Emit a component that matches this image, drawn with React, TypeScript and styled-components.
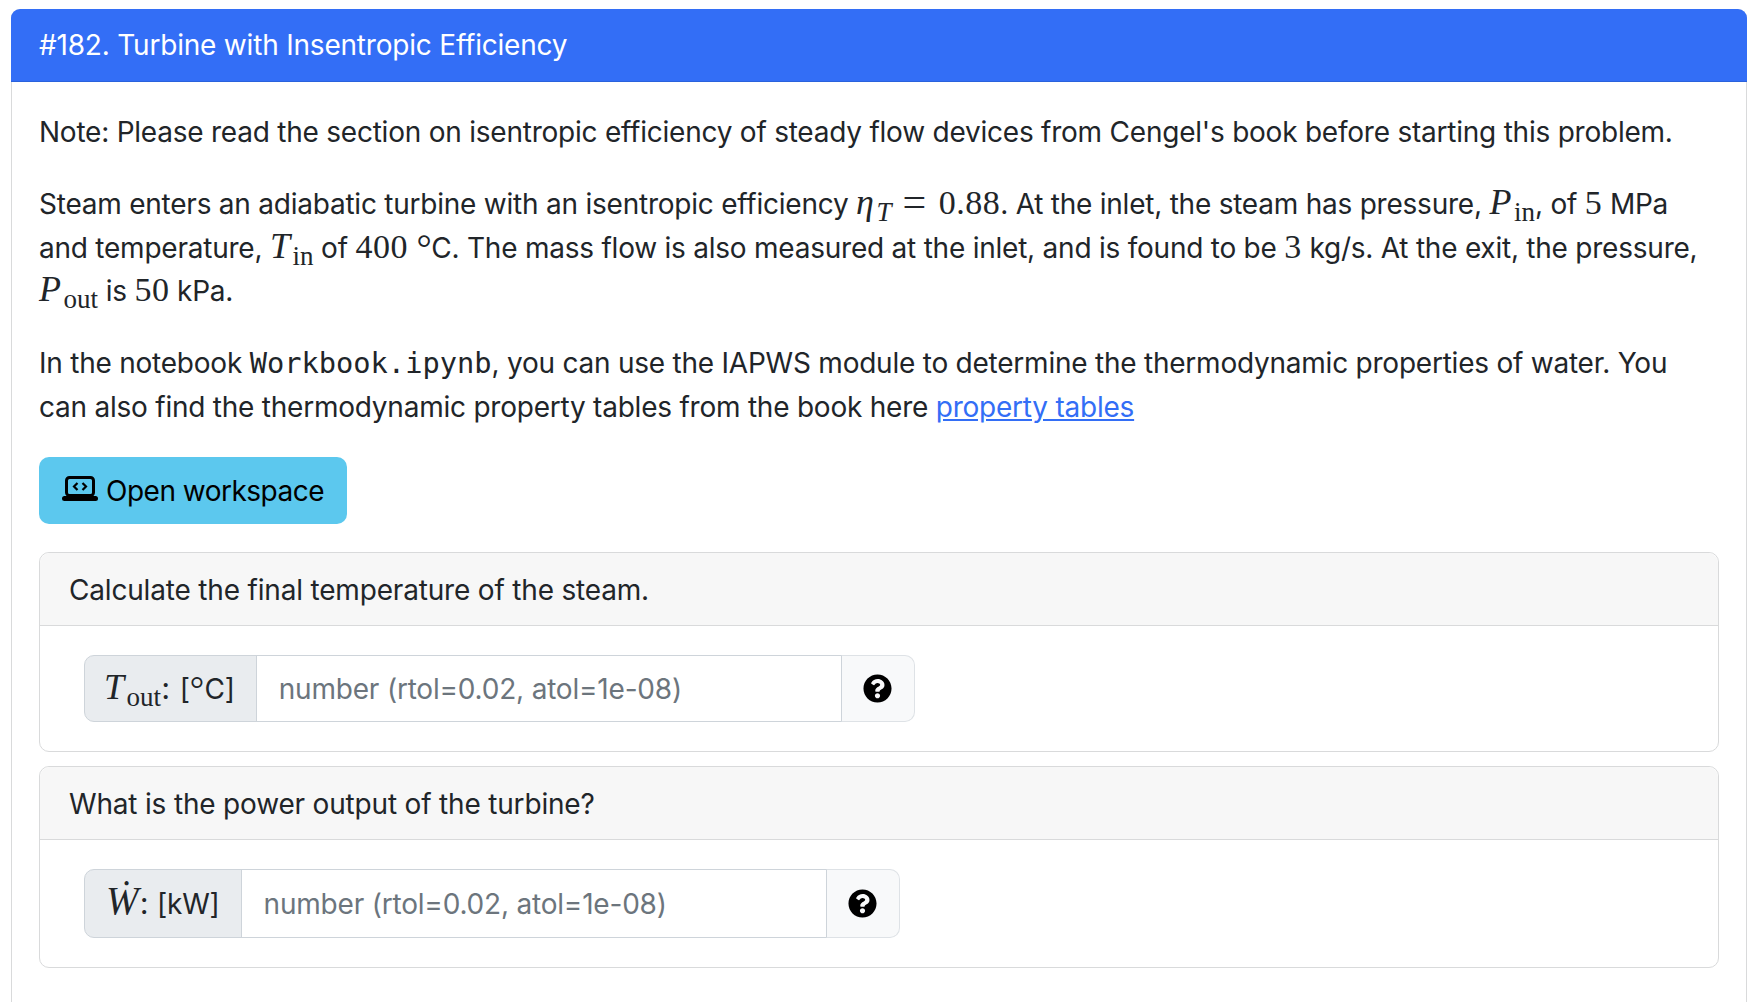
import React from 'react';
import styled, { createGlobalStyle } from 'styled-components';
import { FaQuestionCircle } from 'react-icons/fa';

const GlobalStyle = createGlobalStyle`
  html, body {
    margin: 0;
    height: 100%;
    overflow: hidden;
    background: #fff;
  }
  body {
    padding: 9px 5px 0 11px;
    box-sizing: border-box;
    font-family: Inter, "Liberation Sans", sans-serif;
    font-size: 28px;
    line-height: 43.5px;
    letter-spacing: -0.23px;
    color: #212529;
  }
`

function LaptopCodeIcon() {
  return (
    <IconSvg viewBox="0 0 36 25" width="36" height="25">
      <rect x="4.5" y="1.5" width="27" height="18" rx="3" fill="none" stroke="#000" strokeWidth="3" />
      <rect x="0" y="20" width="36" height="5" rx="2.5" fill="#000" />
      <path d="M15.5 7l-3.5 3.5 3.5 3.5M20.5 7l3.5 3.5-3.5 3.5" fill="none" stroke="#000" strokeWidth="2.2" />
    </IconSvg>
  )
}

function Question({ title, label, inset, groupHeight }: { title: string; label: React.ReactNode; inset: number; groupHeight: number }) {
  return (
    <QuestionCard>
      <QuestionHeader>{title}</QuestionHeader>
      <QuestionBody>
        <InputGroup $height={groupHeight}>
          <InputLabel $inset={inset}><span>{label}</span></InputLabel>
          <NumberInput type="text" placeholder="number (rtol=0.02, atol=1e-08)" />
          <HelpAddon>
            <FaQuestionCircle size={29} color="#000" />
          </HelpAddon>
        </InputGroup>
      </QuestionBody>
    </QuestionCard>
  )
}

function App() {
  return (
    <>
      <GlobalStyle />
      <Card>
        <CardHeader>#182. Turbine with Insentropic Efficiency</CardHeader>
        <CardBody>
          <Paragraph>
            Note: Please read the section on isentropic efficiency of steady flow devices from Cengel's book before starting this problem.
          </Paragraph>
          <Paragraph>
            Steam enters an adiabatic turbine with an isentropic efficiency <Var>η</Var><SubVar>T</SubVar><Rel>=</Rel><Num>0.88</Num>. At the inlet, the steam has pressure, <Var>P</Var><Sub>in</Sub>, of <Num>5</Num> MPa<br />
            and temperature, <Var>T</Var><Sub>in</Sub> of <Num>400</Num> <Degree>°</Degree>C. The mass flow is also measured at the inlet, and is found to be <Num>3</Num> kg/s. At the exit, the pressure,<br />
            <Var>P</Var><Sub>out</Sub> is <Num>50</Num> kPa.
          </Paragraph>
          <Paragraph>
            In the notebook <Code>Workbook.ipynb</Code>, you can use the IAPWS module to determine the thermodynamic properties of water. You<br />
            can also find the thermodynamic property tables from the book here <Link href="#">property tables</Link>
          </Paragraph>
          <WorkspaceButton>
            <LaptopCodeIcon />
            Open workspace
          </WorkspaceButton>
          <Question
            title="Calculate the final temperature of the steam."
            label={<><Var>T</Var><Sub>out</Sub><Num>:</Num> <Bracket>[</Bracket><LabelDegree>°</LabelDegree>C]</>}
            inset={19}
            groupHeight={67}
          />
          <Question
            title="What is the power output of the turbine?"
            label={<><WideVar>Ẇ</WideVar><Num>:</Num> [kW]</>}
            inset={21}
            groupHeight={69}
          />
        </CardBody>
      </Card>
    </>
  )
}

const Card = styled.div`
  border: 1px solid #d9dadb;
  border-bottom: 0;
  border-radius: 9px 9px 0 0;
  height: 1040px;
  box-sizing: border-box;
`

const CardHeader = styled.div`
  background: #336ef6;
  color: #fff;
  height: 73px;
  margin: -1px -1px 0;
  padding: 2px 28px 0;
  box-sizing: border-box;
  border-radius: 9px 9px 0 0;
  border-bottom: 1px solid #2a62dc;
  display: flex;
  align-items: center;
  letter-spacing: -0.2px;
`

const CardBody = styled.div`
  padding: 29px 27px 28px 27px;
`

const Paragraph = styled.p`
  margin: 0 0 28.5px;
`

const Var = styled.span`
  font-family: "Liberation Serif", serif;
  font-style: italic;
  font-size: 36px;
  letter-spacing: 2.5px;
  line-height: 0;
`

const WideVar = styled(Var)`
  font-size: 39px;
  letter-spacing: 1px;
`

const Num = styled.span`
  font-family: "Liberation Serif", serif;
  font-size: 34px;
  letter-spacing: 0.5px;
  line-height: 0;
`

const Rel = styled(Num)`
  font-size: 42px;
  margin: 0 12px 0 11px;
  vertical-align: -2px;
`

const Degree = styled(Num)`
  font-size: 38px;
  margin: 0 -1px 0 1px;
  vertical-align: -3px;
`

const LabelDegree = styled(Degree)`
  font-size: 36px;
  margin: 0;
  vertical-align: -2px;
`

const Bracket = styled.span`
  margin-left: 1px;
`

const Sub = styled.sub`
  font-family: "Liberation Serif", serif;
  font-size: 27px;
  letter-spacing: 0;
  line-height: 0;
  vertical-align: -7px;
`

const SubVar = styled(Sub)`
  font-style: italic;
`

const Code = styled.code`
  font-family: "DejaVu Sans Mono", monospace;
  font-size: 28.7px;
  letter-spacing: 0;
  line-height: 0;
`

const Link = styled.a`
  color: #336ef6;
  text-decoration: underline;
`

const WorkspaceButton = styled.button`
  display: flex;
  align-items: center;
  gap: 8px;
  width: 308px;
  height: 67px;
  padding: 3px 0 0 23px;
  margin: -1px 0 28px;
  border: 0;
  border-radius: 10px;
  background: #5cc8ee;
  color: #000;
  font: inherit;
  letter-spacing: -0.5px;
`

const IconSvg = styled.svg`
  flex: none;
  margin-top: -7px;
`

const QuestionCard = styled.div`
  border: 1px solid #d9dadb;
  border-radius: 10px;
  margin-bottom: 14px;
`

const QuestionHeader = styled.div`
  height: 73px;
  padding: 4px 29px 0;
  box-sizing: border-box;
  background: #f7f7f7;
  border-bottom: 1px solid #d9dadb;
  border-radius: 10px 10px 0 0;
  display: flex;
  align-items: center;
  letter-spacing: -0.18px;
`

const QuestionBody = styled.div`
  padding: 29px 44px 29px;
`

const InputGroup = styled.div<{ $height: number }>`
  display: flex;
  height: ${p => p.$height}px;
  width: fit-content;
`

const InputLabel = styled.div<{ $inset: number }>`
  display: flex;
  align-items: center;
  white-space: pre-wrap;
  padding: 4px 21px 0 ${p => p.$inset}px;
  background: #e9ecef;
  border: 1px solid #ced4da;
  border-radius: 10px 0 0 10px;
  color: #212529;
`

const NumberInput = styled.input`
  width: 586px;
  box-sizing: border-box;
  padding: 3px 22px 0;
  margin-left: -1px;
  border: 1px solid #ced4da;
  font: inherit;
  letter-spacing: -0.2px;
  color: #212529;
  outline: none;
  &::placeholder {
    color: #6c757d;
    opacity: 1;
  }
`

const HelpAddon = styled.div`
  display: flex;
  align-items: center;
  justify-content: center;
  width: 72px;
  margin-left: -1px;
  background: #f8f9fa;
  border: 1px solid #dee2e6;
  border-left-color: #ced4da;
  border-radius: 0 10px 10px 0;
`

export default App
